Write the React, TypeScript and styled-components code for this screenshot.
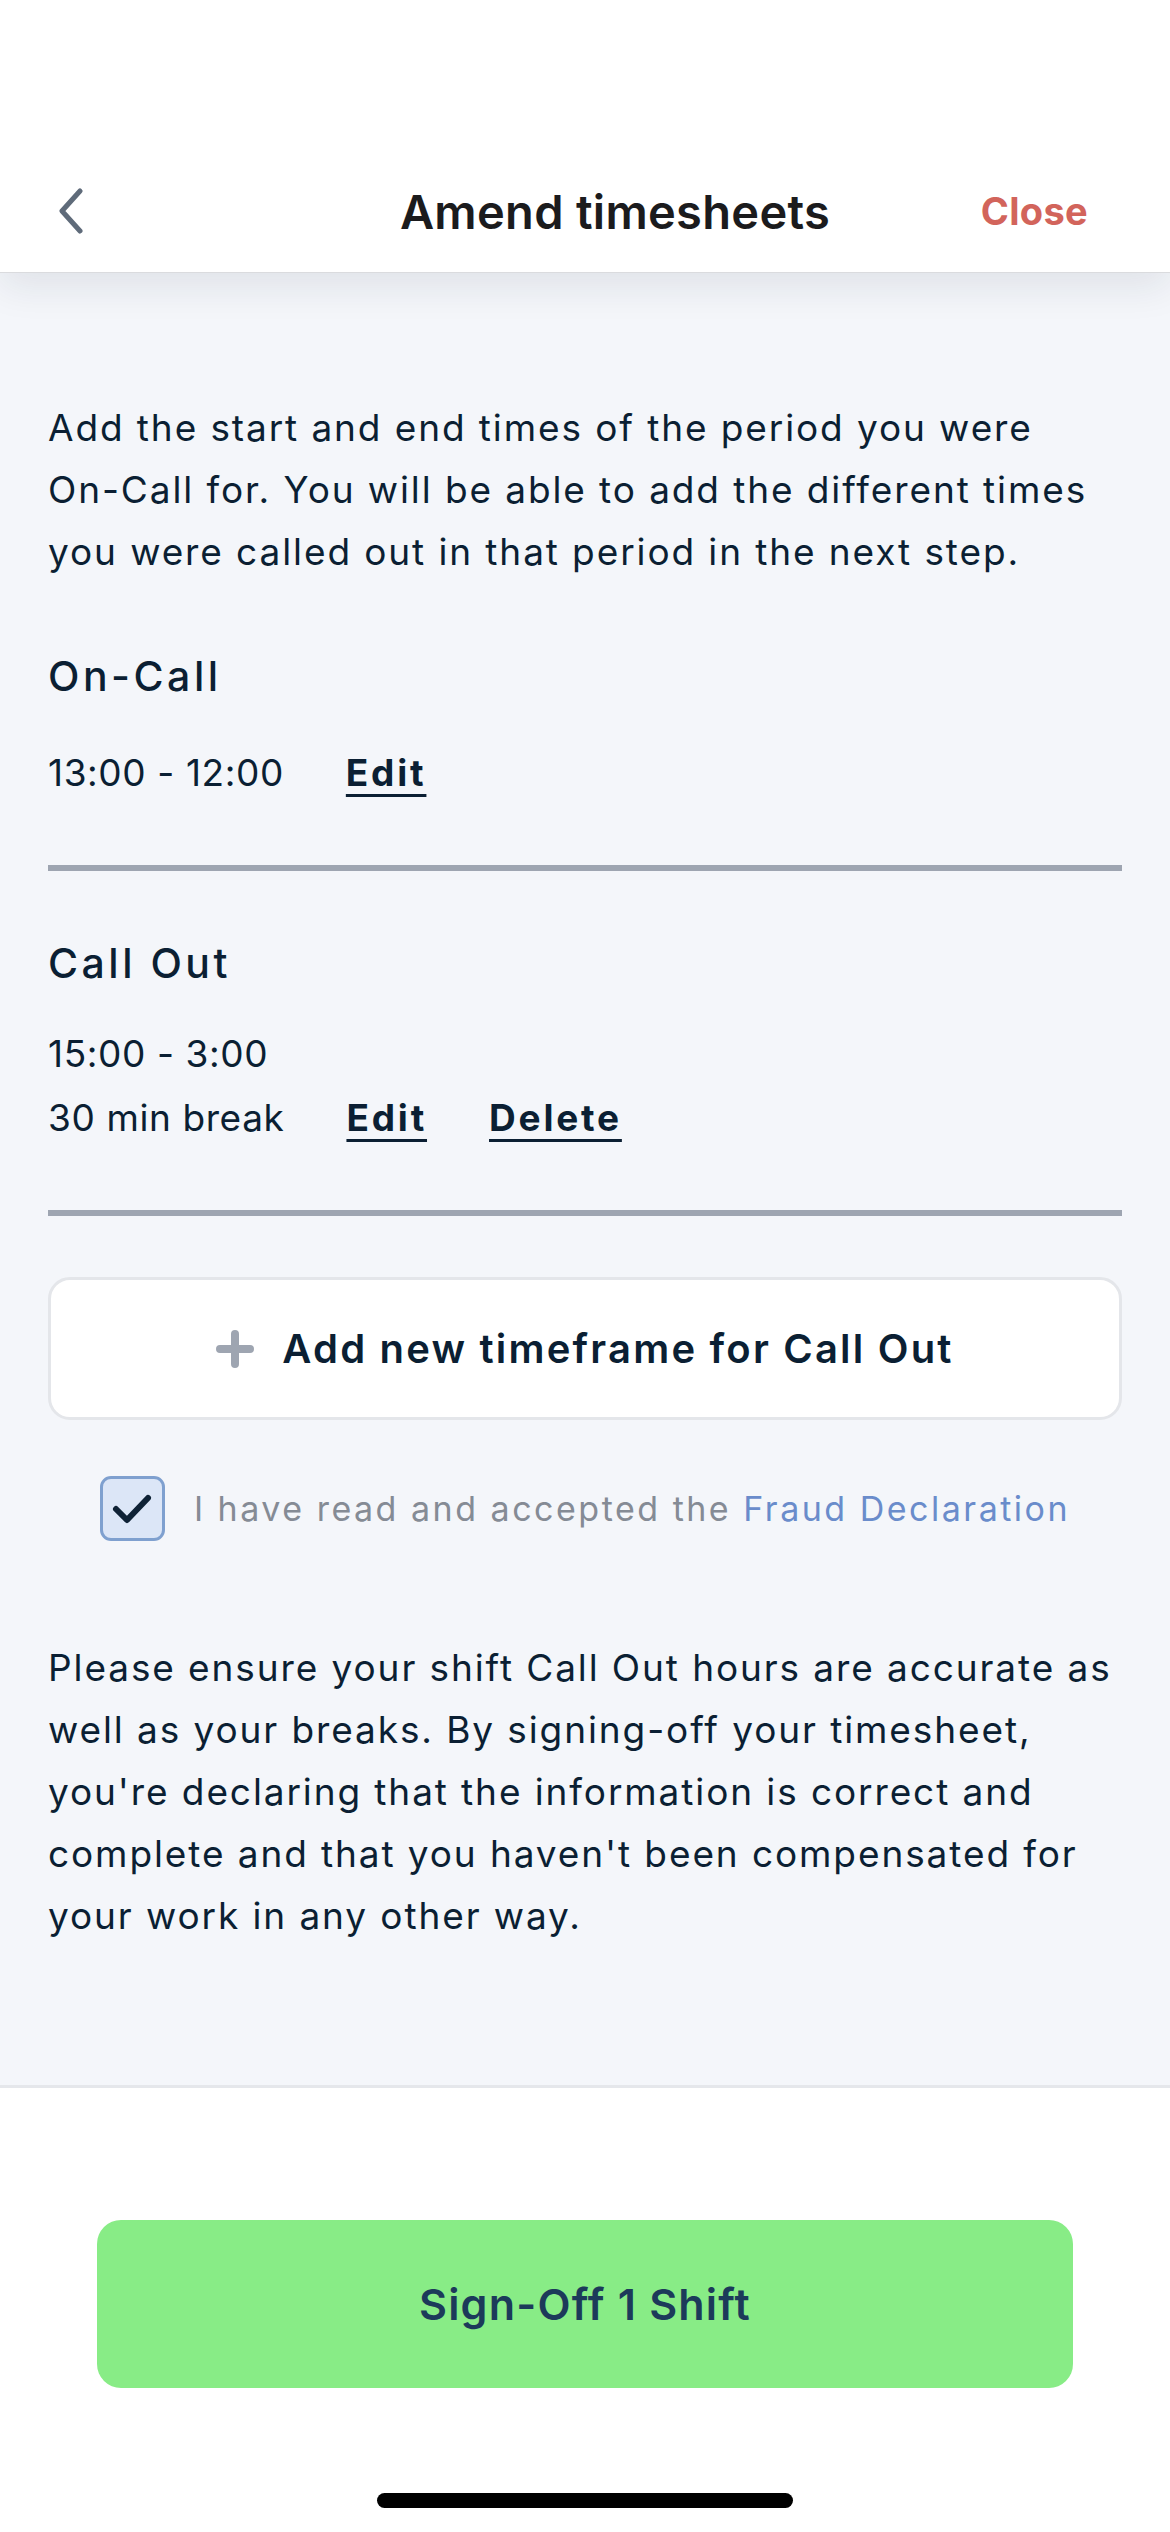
import React, { useState } from 'react';
import styled, { createGlobalStyle } from 'styled-components';

const GlobalStyle = createGlobalStyle`
  html, body {
    margin: 0;
    padding: 0;
    background: #ffffff;
  }
  body {
    font-family: Inter, "Open Sans", sans-serif;
    color: #0b1f33;
  }
  * {
    box-sizing: border-box;
  }
`;

const Screen = styled.div`
  width: 1170px;
  min-height: 2532px;
  display: flex;
  flex-direction: column;
  background: #ffffff;
`;

// title sits a bit right of centre in the design, hence the uneven side columns
const Header = styled.header`
  position: relative;
  z-index: 2;
  height: 273px;
  padding: 150px 82px 0 56px;
  background: #ffffff;
  border-bottom: 1px solid #dadbde;
  box-shadow: 0 14px 36px rgba(20, 30, 50, 0.09);
  display: grid;
  grid-template-columns: 260px 1fr 174px;
  align-items: center;
`;

const BackButton = styled.button`
  all: unset;
  cursor: pointer;
  display: flex;
  align-items: center;
  width: 40px;
  height: 60px;
`;

const Title = styled.h1`
  margin: 0;
  text-align: center;
  font-size: 47px;
  font-weight: 600;
  color: #1b1b1d;
  letter-spacing: 0.3px;
`;

const CloseButton = styled.button`
  all: unset;
  cursor: pointer;
  justify-self: end;
  font-family: Inter, sans-serif;
  font-size: 38px;
  font-weight: 700;
  color: #d2645b;
  letter-spacing: 0.3px;
`;

const Content = styled.main`
  flex: 1;
  background: #f4f6fa;
  padding: 124px 48px 136px;
  display: flex;
  flex-direction: column;
`;

const Paragraph = styled.p<{ $top?: number }>`
  margin: ${(p) => p.$top ?? 0}px 0 0;
  font-size: 37px;
  line-height: 62px;
  font-weight: 400;
  letter-spacing: 1.9px;
`;

const SectionTitle = styled.h2<{ $top: number }>`
  margin: ${(p) => p.$top}px 0 0;
  font-size: 41px;
  line-height: 52px;
  font-weight: 500;
  letter-spacing: 3.5px;
`;

const InfoRow = styled.div<{ $top?: number }>`
  margin-top: ${(p) => p.$top ?? 0}px;
  display: flex;
  align-items: baseline;
  gap: 62px;
  font-size: 37px;
  line-height: 62px;
  letter-spacing: 0.6px;
`;

const LinkAction = styled.button`
  all: unset;
  cursor: pointer;
  font-weight: 700;
  letter-spacing: 2.8px;
  text-decoration: underline;
  text-decoration-thickness: 3px;
  text-underline-offset: 8px;
`;

const Divider = styled.hr`
  margin: 61px 0 0;
  border: 0;
  height: 6px;
  background: #9ea5b1;
`;

const AddButton = styled.button`
  all: unset;
  cursor: pointer;
  margin-top: 61px;
  height: 137px;
  border: 3px solid #e4e6ea;
  border-radius: 22px;
  background: #ffffff;
  display: flex;
  align-items: center;
  justify-content: center;
  gap: 28px;
  font-family: Inter, sans-serif;
  font-size: 40px;
  font-weight: 600;
  color: #0b1f33;
  letter-spacing: 2.2px;
`;

const CheckRow = styled.label`
  margin-top: 56px;
  display: flex;
  align-items: center;
  justify-content: center;
  gap: 29px;
  cursor: pointer;
`;

const CheckBox = styled.span<{ $checked: boolean }>`
  flex: none;
  width: 65px;
  height: 65px;
  border: 3px solid #7fa0cf;
  border-radius: 11px;
  background: ${(p) => (p.$checked ? '#dce6f7' : '#ffffff')};
  display: flex;
  align-items: center;
  justify-content: center;
`;

const CheckLabel = styled.span`
  font-size: 34px;
  color: #858b95;
  letter-spacing: 2.5px;
  white-space: nowrap;
`;

const Highlight = styled.span`
  color: #6a8ccb;
`;

const Footer = styled.footer`
  border-top: 3px solid #e5e7eb;
  background: #ffffff;
  padding: 132px 97px 24px;
  display: flex;
  flex-direction: column;
  align-items: center;
`;

const SignOffButton = styled.button`
  all: unset;
  cursor: pointer;
  width: 100%;
  height: 168px;
  border-radius: 24px;
  background: #88ec86;
  display: flex;
  align-items: center;
  justify-content: center;
  font-family: Inter, sans-serif;
  font-size: 43px;
  font-weight: 600;
  color: #1c3a5a;
  letter-spacing: 1.2px;
`;

const HomeIndicator = styled.div`
  margin-top: 105px;
  width: 416px;
  height: 15px;
  border-radius: 8px;
  background: #000000;
`;

const ChevronLeft = () => (
  <svg width="30" height="46" viewBox="0 0 30 46" fill="none">
    <path d="M24 3 L6 23 L24 43" stroke="#5f6b7a" strokeWidth="5" strokeLinecap="round" strokeLinejoin="round" />
  </svg>
);

const PlusIcon = () => (
  <svg width="38" height="38" viewBox="0 0 38 38" fill="none">
    <path d="M19 4 V34 M4 19 H34" stroke="#9ea5b1" strokeWidth="8" strokeLinecap="round" />
  </svg>
);

const CheckMark = () => (
  <svg width="42" height="34" viewBox="0 0 42 34" fill="none">
    <path d="M5 17 L16 28 L37 6" stroke="#0f2236" strokeWidth="6" strokeLinecap="round" strokeLinejoin="round" />
  </svg>
);

// word joiner keeps "On-Call" from splitting at the hyphen
const ON_CALL = 'On-\u2060Call';

export default function App() {
  const [accepted, setAccepted] = useState(true);

  return (
    <Screen>
      <GlobalStyle />
      <Header>
        <BackButton aria-label="Back">
          <ChevronLeft />
        </BackButton>
        <Title>Amend timesheets</Title>
        <CloseButton>Close</CloseButton>
      </Header>

      <Content>
        <Paragraph>
          {`Add the start and end times of the period you were ${ON_CALL} for. You will be able to add the different times you were called out in that period in the next step.`}
        </Paragraph>

        <SectionTitle $top={67}>On-Call</SectionTitle>
        <InfoRow $top={40}>
          <span>13:00 - 12:00</span>
          <LinkAction>Edit</LinkAction>
        </InfoRow>

        <Divider />

        <SectionTitle $top={66}>Call Out</SectionTitle>
        <InfoRow $top={34}>
          <span>15:00 - 3:00</span>
        </InfoRow>
        <InfoRow $top={2}>
          <span>30 min break</span>
          <LinkAction>Edit</LinkAction>
          <LinkAction>Delete</LinkAction>
        </InfoRow>

        <Divider />

        <AddButton>
          <PlusIcon />
          Add new timeframe for Call Out
        </AddButton>

        <CheckRow onClick={() => setAccepted((v) => !v)}>
          <CheckBox $checked={accepted}>{accepted && <CheckMark />}</CheckBox>
          <CheckLabel>
            I have read and accepted the <Highlight>Fraud Declaration</Highlight>
          </CheckLabel>
        </CheckRow>

        <Paragraph $top={96}>
          Please ensure your shift Call Out hours are accurate as well as your breaks. By
          signing-off your timesheet, you're declaring that the information is correct and complete
          and that you haven't been compensated for your work in any other way.
        </Paragraph>
      </Content>

      <Footer>
        <SignOffButton>Sign-Off 1 Shift</SignOffButton>
        <HomeIndicator />
      </Footer>
    </Screen>
  );
}
